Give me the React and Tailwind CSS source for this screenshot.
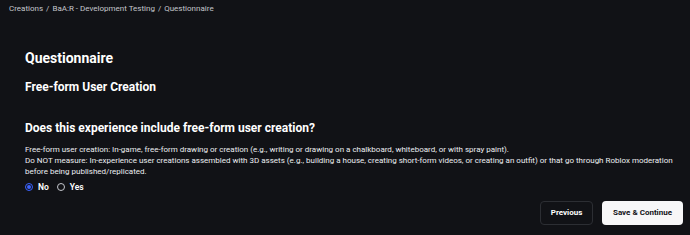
export default function App() {
  const font = { fontFamily: 'Roboto, "Noto Sans", sans-serif' };
  return (
    <div className="w-[690px] h-[235px] bg-[#111216] text-white overflow-hidden flex flex-col" style={font}>
      <div className="pl-[9px] pt-[3px] h-[14px] text-[8px] leading-[12px] text-[#c4c6cc] flex gap-[3px]">
        <span>Creations</span><span>/</span><span>BaA:R - Development Testing</span><span>/</span><span>Questionnaire</span>
      </div>
      <div className="pl-[25px] flex flex-col">
        <h1 className="mt-[35px] text-[14px] leading-[18px] font-bold">Questionnaire</h1>
        <h2 className="mt-[13px] text-[12px] leading-[15px] font-bold">Free-form User Creation</h2>
        <h3 className="mt-[26px] text-[12px] leading-[15px] font-bold">Does this experience include free-form user creation?</h3>
        <div className="mt-[8px] text-[8px] leading-[11px] text-[#eceef1] w-[650px]">
          <p>Free-form user creation: In-game, free-form drawing or creation (e.g., writing or drawing on a chalkboard, whiteboard, or with spray paint).</p>
          <p>Do NOT measure: In-experience user creations assembled with 3D assets (e.g., building a house, creating short-form videos, or creating an outfit) or that go through Roblox moderation before being published/replicated.</p>
        </div>
        <div className="mt-[5px] flex items-center text-[8.5px] leading-[10px] font-semibold">
          <span className="w-[8px] h-[8px] rounded-full border border-[#3b63ff] flex items-center justify-center">
            <span className="w-[4px] h-[4px] rounded-full bg-[#3b63ff]"></span>
          </span>
          <span className="ml-[5px]">No</span>
          <span className="ml-[8px] w-[8px] h-[8px] rounded-full border border-[#c4c6cc]"></span>
          <span className="ml-[5px]">Yes</span>
        </div>
      </div>
      <div className="flex justify-end gap-[9px] pr-[7px] mt-[9px]">
        <button className="w-[53px] h-[24px] rounded-[4px] border border-[#2c2e33] text-[8px] font-bold text-white">Previous</button>
        <button className="w-[81px] h-[24px] rounded-[4px] bg-[#f7f7f8] text-[8px] font-bold text-[#111216]">Save &amp; Continue</button>
      </div>
    </div>
  );
}
